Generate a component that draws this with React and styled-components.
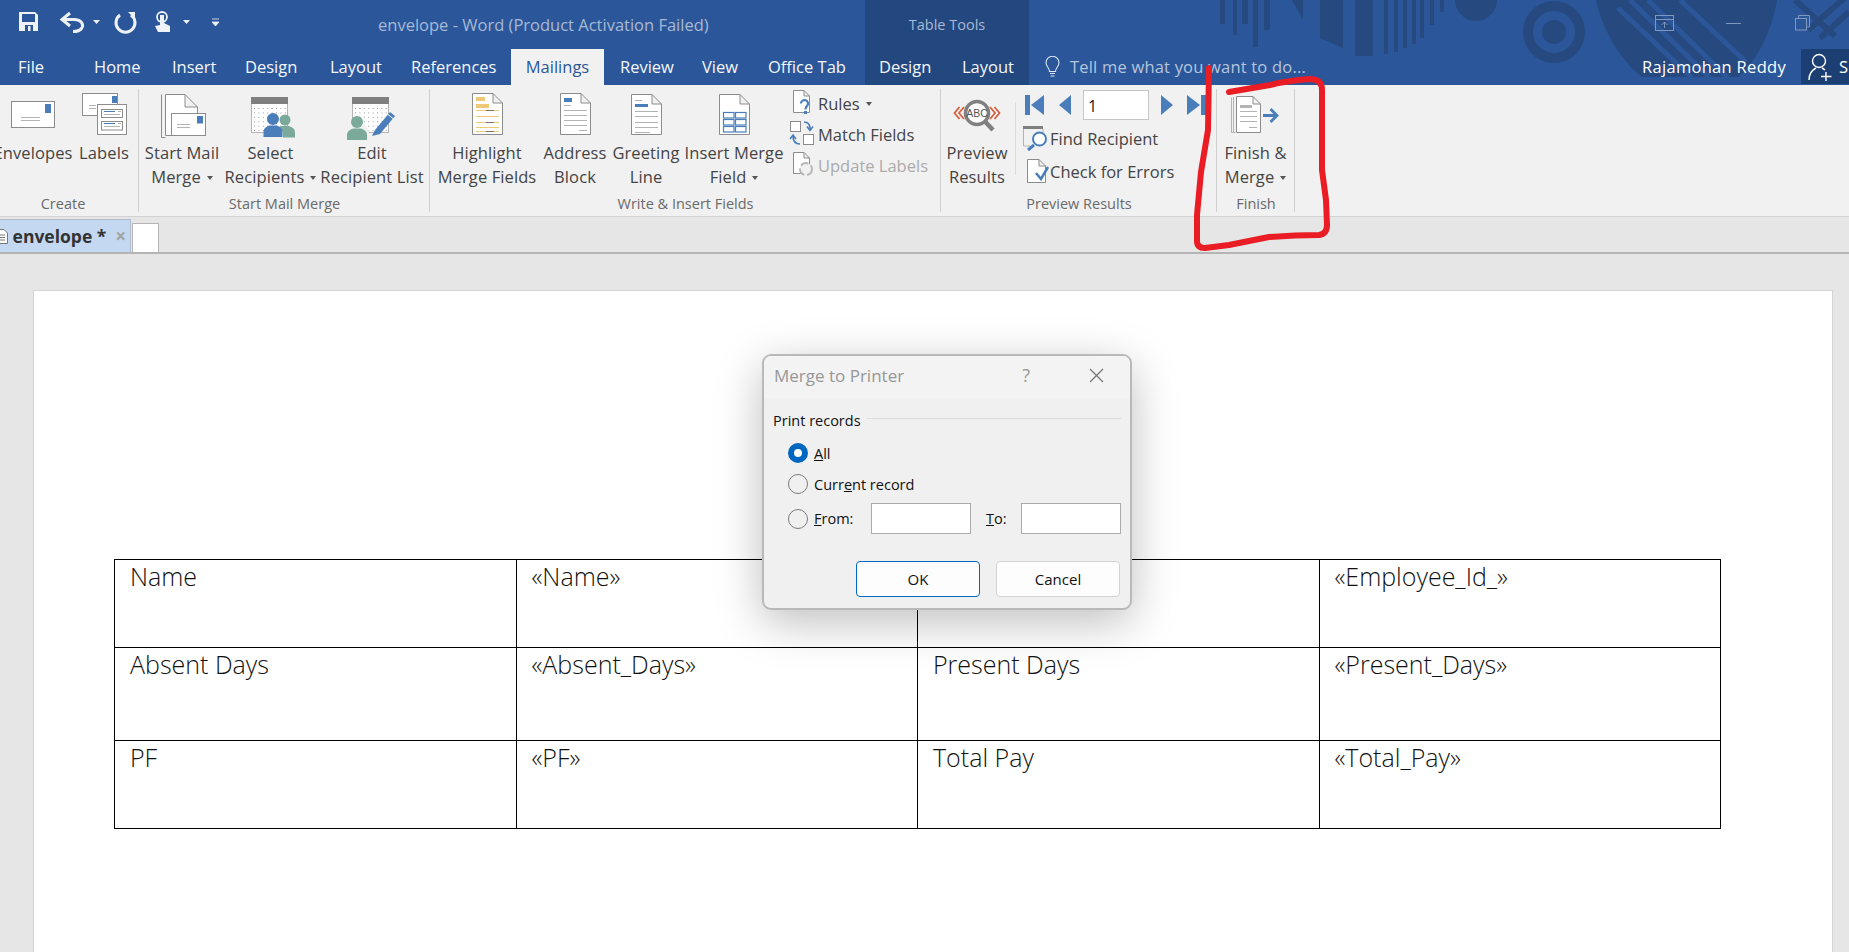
import React from 'react';
import styled, { createGlobalStyle } from 'styled-components';

const UI = '"Open Sans", "Noto Sans", "Liberation Sans", sans-serif';
const BLUE = '#4a7ebb';
const LINE = '#8c8c8c';
const PALE = '#b3b3b3';

const GlobalStyle = createGlobalStyle`
  html, body { margin: 0; padding: 0; background: #e6e6e6; overflow: hidden; }
  body { font-family: ${UI}; }
`;

const Screen = styled.div`
  position: relative;
  width: 1849px;
  height: 952px;
  overflow: hidden;
  background: #e6e6e6;
`;

/* ---------- header ---------- */
const Header = styled.header`
  position: relative;
  height: 85px;
  background: #2b579a;
  overflow: hidden;
`;
const Decor = styled.svg`
  position: absolute;
  left: 0;
  top: 0;
`;
const TitleRow = styled.div`
  position: relative;
  display: flex;
  height: 49px;
`;
const Qat = styled.svg`
  flex: 0 0 378px;
  height: 49px;
`;
const DocTitle = styled.div`
  flex: 0 0 487px;
  line-height: 50px;
  font-size: 16.5px;
  color: #a7b9d4;
  white-space: nowrap;
`;
const ToolsLabel = styled.div`
  flex: 0 0 164px;
  background: #23487f;
  text-align: center;
  line-height: 50px;
  font-size: 14.5px;
  color: #a7b9d4;
`;
const WindowIcons = styled.svg`
  margin-left: auto;
  width: 200px;
  height: 49px;
`;
const TabRow = styled.nav`
  position: relative;
  display: flex;
  align-items: stretch;
  height: 36px;
  padding-left: 18px;
`;
const Tab = styled.div`
  flex: 0 0 ${p => p.$w}px;
  min-width: 0;
  margin-left: ${p => p.$ml || 0}px;
  line-height: 35px;
  font-size: 16.5px;
  white-space: nowrap;
  color: #f4f6fa;
`;
const ActiveTab = styled.div`
  flex: 0 0 93px;
  background: #f1f1f1;
  color: #2b579a;
  text-align: center;
  line-height: 35px;
  font-size: 16.5px;
`;
const ContextTabs = styled.div`
  flex: 0 0 150px;
  display: flex;
  padding-left: 14px;
  background: #23487f;
`;
const TellMe = styled.div`
  display: flex;
  align-items: center;
  gap: 10px;
  margin-left: 16px;
  margin-top: -1px;
  font-size: 16.5px;
  letter-spacing: 0.2px;
  color: #b6c5dc;
  white-space: nowrap;
`;
const UserName = styled.div`
  margin-left: auto;
  line-height: 35px;
  font-size: 16.5px;
  letter-spacing: 0.3px;
  color: #fff;
  white-space: nowrap;
`;
const Share = styled.div`
  flex: 0 0 48px;
  display: flex;
  align-items: center;
  gap: 6px;
  margin-left: 15px;
  margin-bottom: 1px;
  padding-left: 7px;
  box-sizing: border-box;
  background: #1c3f73;
  color: #fff;
  font-size: 16.5px;
  overflow: hidden;
`;

/* ---------- ribbon ---------- */
const Ribbon = styled.section`
  display: flex;
  height: 131px;
  margin-left: -13px;
  background: #f1f1f1;
  border-bottom: 1px solid #d2d2d2;
  width: 1862px;
  overflow: hidden;
`;
const Group = styled.div`
  position: relative;
  flex: 0 0 ${p => p.$w}px;
  min-width: 0;
  display: flex;
  flex-direction: column;
  padding-left: ${p => p.$pl || 0}px;
  box-sizing: border-box;
  &::after {
    content: '';
    position: absolute;
    right: 0;
    top: 4px;
    bottom: 4px;
    width: 1px;
    background: #cfcfcf;
  }
`;
const GroupBody = styled.div`
  flex: 1;
  display: flex;
`;
const GroupLabel = styled.div`
  position: absolute;
  left: 0;
  right: 0;
  bottom: 1px;
  height: 22px;
  text-align: center;
  line-height: 22px;
  font-size: 14.5px;
  color: #6a6a6a;
  white-space: nowrap;
`;
const LargeButton = styled.div`
  flex: 0 0 ${p => p.$w}px;
  min-width: 0;
  display: flex;
  flex-direction: column;
  align-items: center;
`;
const BigSvg = styled.svg`
  flex: 0 0 56px;
  overflow: visible;
`;
const Line = styled.div`
  height: 24px;
  line-height: 24px;
  font-size: 16.5px;
  letter-spacing: 0.1px;
  color: #444;
  white-space: nowrap;
`;
const Caret = styled.span`
  display: inline-block;
  width: 0;
  height: 0;
  margin-left: 6px;
  vertical-align: 3px;
  border-left: 3.5px solid transparent;
  border-right: 3.5px solid transparent;
  border-top: 4px solid #555;
`;
const SmallColumn = styled.div`
  display: flex;
  flex-direction: column;
  margin-left: ${p => p.$ml || 0}px;
  padding-top: ${p => p.$pt || 3}px;
`;
const SmallRow = styled.div`
  display: flex;
  align-items: center;
  height: ${p => p.$h}px;
  font-size: 16.5px;
  color: ${p => (p.$off ? '#ababab' : '#444')};
  white-space: nowrap;
`;
const SmallSvg = styled.svg`
  flex: 0 0 ${p => p.$w}px;
  overflow: visible;
`;
const VRule = styled.div`
  flex: 0 0 1px;
  height: 73px;
  margin: 17px 0 0 2px;
  background: #dcdcdc;
`;
const NavRow = styled.div`
  display: flex;
  align-items: center;
  height: 30px;
  margin-bottom: 2px;
  padding-left: 2px;
`;
const NavSvg = styled.svg`
  flex: 0 0 auto;
  margin-left: ${p => p.$ml || 0}px;
  fill: ${BLUE};
`;
const RecordBox = styled.div`
  flex: 0 0 66px;
  height: 30px;
  box-sizing: border-box;
  margin-left: 12px;
  padding-left: 4px;
  background: #fff;
  border: 1px solid #c6c6c6;
  font-size: 16px;
  line-height: 30px;
  color: #222;
`;

/* ---------- document tabs ---------- */
const TabStrip = styled.div`
  display: flex;
  align-items: flex-end;
  gap: 1px;
  height: 37px;
  box-sizing: border-box;
  background: #e6e6e6;
  border-bottom: 2px solid #b4b4b4;
`;
const DocTab = styled.div`
  flex: 0 0 131px;
  height: 33px;
  display: flex;
  align-items: center;
  box-sizing: border-box;
  background: #c5d8f2;
  border: 1px solid #b0bdd0;
  border-left: 0;
  border-bottom: 0;
  font-size: 17.5px;
  font-weight: 700;
  color: #333;
  white-space: nowrap;
`;
const DocTabClose = styled.span`
  margin-left: 9px;
  font-size: 19px;
  line-height: 19px;
  font-weight: 700;
  color: #a3a3a3;
`;
const NewTab = styled.div`
  flex: 0 0 27px;
  height: 29px;
  box-sizing: border-box;
  background: #fff;
  border: 1px solid #b4b4b4;
  border-bottom: 0;
`;

/* ---------- page ---------- */
const DocArea = styled.main`
  padding: 36px 0 0 33px;
`;
const Page = styled.div`
  width: 1800px;
  height: 700px;
  box-sizing: border-box;
  padding: 268px 0 0 80px;
  background: #fff;
  border: 1px solid #d4d4d4;
`;
const Table = styled.table`
  border-collapse: collapse;
  table-layout: fixed;
  width: 1607px;
  font-family: "Open Sans", "Liberation Sans", sans-serif;
  font-weight: 300;
  font-size: 25px;
  color: #111;
`;
const Row = styled.tr`
  height: ${p => p.$h}px;
`;
const Cell = styled.td`
  vertical-align: top;
  padding: 0 15px;
  border: 1.2px solid #000;
  line-height: 32px;
`;

/* ---------- dialog ---------- */
const Dialog = styled.div`
  position: absolute;
  left: 762px;
  top: 354px;
  width: 370px;
  height: 256px;
  box-sizing: border-box;
  background: #f0f0f0;
  border: 2px solid #b9b9b9;
  border-radius: 9px;
  box-shadow: 0 12px 46px rgba(0, 0, 0, 0.26);
  overflow: hidden;
  font-size: 14.5px;
  color: #111;
`;
const DialogBar = styled.div`
  display: flex;
  align-items: center;
  height: 42px;
  box-sizing: border-box;
  padding: 0 0 4px 10px;
  background: #f3f3f3;
  font-size: 17px;
  color: #979797;
`;
const HelpMark = styled.span`
  margin-left: 118px;
  font-size: 18px;
`;
const CloseSvg = styled.svg`
  margin-left: 59px;
`;
const DialogBody = styled.div`
  padding: 12px 9px 0;
`;
const Legend = styled.div`
  display: flex;
  align-items: center;
  gap: 6px;
  height: 20px;
  margin-bottom: 8px;
  &::after {
    content: '';
    flex: 1;
    height: 1px;
    margin-top: -3px;
    background: #dcdcdc;
  }
`;
const RadioRow = styled.div`
  display: flex;
  align-items: center;
  height: ${p => p.$h || 30}px;
  margin-left: 15px;
  margin-bottom: ${p => p.$mb || 1}px;
`;
const Radio = styled.span`
  flex: 0 0 20px;
  height: 20px;
  box-sizing: border-box;
  border-radius: 50%;
  margin-right: 6px;
  background: ${p => (p.$on ? '#fff' : 'transparent')};
  border: ${p => (p.$on ? '6px solid #0067c0' : '1.5px solid #7a7a7a')};
`;
const FieldLabel = styled.span`
  flex: 0 0 ${p => p.$w}px;
  margin-left: ${p => p.$ml || 0}px;
`;
const Field = styled.div`
  flex: 0 0 100px;
  height: 31px;
  box-sizing: border-box;
  background: #fff;
  border: 1px solid #ababab;
`;
const Buttons = styled.div`
  display: flex;
  justify-content: flex-end;
  gap: 16px;
  margin: 27px 1px 0 0;
`;
const DialogButton = styled.div`
  width: 124px;
  height: 36px;
  box-sizing: border-box;
  border-radius: 4px;
  background: #fdfdfd;
  border: ${p => (p.$primary ? '1.5px solid #0067c0' : '1px solid #d3d3d3')};
  text-align: center;
  font-size: 15px;
  line-height: 34px;
`;

const Scribble = styled.svg`
  position: absolute;
  left: 1185px;
  top: 60px;
  pointer-events: none;
`;

/* ---------- icon parts, drawn in screen coordinates ---------- */
const Big = ({ x, w, children }) => (
  <BigSvg width={w} height={56} viewBox={`${x} 85 ${w} 56`}>{children}</BigSvg>
);
const Small = ({ x, y, w, h, children }) => (
  <SmallSvg $w={w} width={w} height={h} viewBox={`${x} ${y} ${w} ${h}`}>{children}</SmallSvg>
);
const Rules = ({ x1, x2, ys, c = PALE }) => ys.map(y => (
  <line key={y} x1={x1} x2={x2} y1={y + 0.5} y2={y + 0.5} stroke={c} />
));
const Sheet = ({ x, y, w, h, fold = 10 }) => (
  <path d={`M${x + 0.5} ${y + 0.5}H${x + w - fold}L${x + w - 0.5} ${y + fold}V${y + h - 0.5}H${x + 0.5}Z M${x + w - fold} ${y + 0.5}V${y + fold}H${x + w - 0.5}`} fill="#fff" stroke={LINE} />
);
const Calendar = ({ x }) => {
  const dots = [];
  for (let i = 0; i < 8; i++) for (let j = 0; j < 6; j++) dots.push([x + 3 + i * 4.4, 108 + j * 4.4]);
  return (
    <>
      <rect x={x + 0.5} y={97.5} width={36} height={35} fill="#fff" stroke={PALE} />
      <rect x={x} y={97} width={37} height={7} fill="#7f7f7f" />
      {dots.map(([a, b]) => <rect key={`${a}-${b}`} x={a} y={b} width={1} height={1} fill="#999" />)}
    </>
  );
};
const Person = ({ cx, cy, r, c, w }) => (
  <>
    <circle cx={cx} cy={cy} r={r} fill={c} />
    <path d={`M${cx - w} ${cy + r + 12}v-5c0-4 ${w * 0.4}-6 ${w * 0.62}-6.500h${w * 0.76}c${w * 0.22} .5 ${w * 0.62} 2.500 ${w * 0.62} 6.500v5z`} fill={c} />
  </>
);

const Envelope = () => (
  <Big x={0} w={66}>
    <rect x="11.500" y="101.500" width="43" height="26" fill="#fff" stroke={LINE} />
    <rect x="45" y="104" width="6" height="9" fill={BLUE} />
    <Rules x1={21} x2={40} ys={[117, 120]} />
  </Big>
);
const LabelsIcon = () => (
  <Big x={70} w={68}>
    <rect x="82.500" y="93.500" width="35" height="22" fill="#fff" stroke={LINE} />
    <rect x="112" y="96" width="5" height="7" fill={BLUE} />
    <Rules x1={89} x2={96} ys={[105, 108]} />
    <rect x="97.500" y="104.500" width="29" height="30" fill="#fff" stroke={LINE} />
    <rect x="101.500" y="109.500" width="21" height="8" fill="#fff" stroke={LINE} />
    <rect x="101.500" y="121.500" width="21" height="8.500" fill="#fff" stroke={LINE} />
    <Rules x1={104} x2={115} ys={[111, 123]} c={BLUE} />
    <Rules x1={118} x2={121} ys={[111, 123]} />
    <Rules x1={104} x2={120} ys={[114, 126]} />
  </Big>
);
const StartMerge = () => (
  <Big x={139} w={86}>
    <path d="M161.500 94.500V137.500H165.500" fill="none" stroke={LINE} />
    <Sheet x={165} y={94} w={33} h={42} fold={13} />
    <rect x="171.500" y="113.500" width="34" height="22" fill="#fff" stroke={LINE} />
    <rect x="197" y="116" width="6" height="7.500" fill={BLUE} />
    <Rules x1={177} x2={190} ys={[124, 127]} />
  </Big>
);
const SelectIcon = () => (
  <Big x={225} w={91}>
    <Calendar x={251} />
    <Person cx={285} cy={120} r={5.500} c="#7ba99a" w={10} />
    <path d="M264 139v-5c0-4 3-6 5-6.500h8c3 .5 6 2.500 6 6.500v5z" fill="#f1f1f1" />
    <Person cx={273} cy={119} r={6} c={BLUE} w={9.500} />
  </Big>
);
const EditIcon = () => (
  <Big x={316} w={112}>
    <Calendar x={352} />
    <path d="M345 139v-6c0-5 4-7 6-8h12c3 1 6 3 6 8v6z" fill="#f1f1f1" />
    <Person cx={357} cy={122} r={6} c="#7ba99a" w={10} />
    <path d="M375 130L390 112L395 116L380 134L372 136Z" fill={BLUE} />
    <path d="M388 114.500L393 118.500" stroke="#f1f1f1" />
  </Big>
);
const HighlightIcon = () => (
  <Big x={430} w={114}>
    <Sheet x={472} y={93} w={31} h={42} />
    <rect x="476" y="97" width="9" height="4" fill="#efc87a" />
    <rect x="476" y="104" width="13" height="4" fill="#efc87a" />
    <Rules x1={476} x2={499} ys={[110, 116, 122, 127, 131]} c="#efc87a" />
    <Rules x1={486} x2={494} ys={[110, 122, 131]} c="#777" />
  </Big>
);
const AddressIcon = () => (
  <Big x={544} w={62}>
    <Sheet x={560} y={93} w={31} h={42} />
    <rect x="564" y="98" width="8" height="4" fill={BLUE} />
    <Rules x1={564} x2={571} ys={[105]} />
    <Rules x1={564} x2={587} ys={[110, 115, 120, 125]} />
    <Rules x1={579} x2={587} ys={[130]} />
  </Big>
);
const GreetingIcon = () => (
  <Big x={606} w={80}>
    <Sheet x={631} y={94} w={31} h={41} />
    <Rules x1={635} x2={642} ys={[100]} />
    <rect x="635" y="104" width="13" height="3" fill={BLUE} />
    <Rules x1={635} x2={658} ys={[111, 116, 122, 127]} />
    <Rules x1={635} x2={650} ys={[132]} />
  </Big>
);
const InsertFieldIcon = () => (
  <Big x={686} w={96}>
    <Sheet x={719} y={94} w={31} h={41} />
    {[0, 1].map(c => [0, 1, 2].map(r => (
      <rect key={`${c}${r}`} x={723.5 + c * 12} y={112.5 + r * 7} width={10.5} height={5.5} fill="#fff" stroke={BLUE} strokeWidth="1.200" />
    )))}
  </Big>
);
const PreviewIcon = () => (
  <Big x={941} w={72}>
    <path d="M959.500 107L954.500 113L959.500 119M964 107L959 113L964 119M990 107L995 113L990 119M994.500 107L999.500 113L994.500 119" fill="none" stroke="#d9603f" strokeWidth="1.800" />
    <circle cx="977" cy="113" r="11.500" fill="#fff" stroke="#808080" strokeWidth="3.500" />
    <path d="M985.500 122L993 130" stroke="#808080" strokeWidth="4.500" />
    <text x="977" y="117" textAnchor="middle" fontFamily="Liberation Sans, sans-serif" fontSize="10.500" fill="#555">ABC</text>
  </Big>
);
const FinishIcon = () => (
  <Big x={1217} w={77}>
    <path d="M1231.500 97.500V132.500H1235.500M1233.500 97V132" fill="none" stroke={PALE} />
    <Sheet x={1236} y={96} w={25} h={37} fold={8} />
    <rect x="1240" y="105" width="12" height="3" fill={PALE} />
    <Rules x1={1240} x2={1257} ys={[111, 116, 121]} />
    <Rules x1={1249} x2={1257} ys={[127]} />
    <path d="M1263 115.500H1276M1270.500 109L1277 115.500L1270.500 122" fill="none" stroke={BLUE} strokeWidth="2.800" />
  </Big>
);

export default function App() {
  return (
    <Screen>
      <GlobalStyle />
      <Header>
        <Decor width="1849" height="85" viewBox="0 0 1849 85" fill="#26497f">
          <rect x="1220" y="0" width="5" height="24" />
          <rect x="1233" y="0" width="4" height="35" />
          <rect x="1242" y="0" width="6" height="24" />
          <rect x="1253" y="0" width="5" height="47" />
          <rect x="1264" y="0" width="6" height="30" />
          <path d="M1292 0H1303V20Z" />
          <path d="M1320 0H1343V48L1320 38Z" />
          <rect x="1355" y="0" width="18" height="56" />
          <rect x="1384" y="0" width="4" height="54" />
          <rect x="1394" y="0" width="4" height="52" />
          <rect x="1403" y="0" width="4" height="48" />
          <rect x="1412" y="0" width="4" height="44" />
          <rect x="1420" y="0" width="4" height="38" />
          <rect x="1430" y="0" width="4" height="25" />
          <rect x="1440" y="0" width="4" height="12" />
          <circle cx="1476" cy="0" r="21" />
          <circle cx="1554" cy="32" r="26" fill="none" stroke="#26497f" strokeWidth="10" />
          <circle cx="1554" cy="32" r="12" />
          <path d="M1596 0C1602 30 1622 62 1642 77H1738C1758 60 1772 30 1777 0Z" />
          <g stroke="#2b579a" strokeWidth="5" fill="none">
            <path d="M1618 8L1692 78M1630 0L1710 78M1648 0L1728 78M1680 0L1746 62" />
          </g>
          <g stroke="#26497f" strokeWidth="6" fill="none">
            <path d="M1795 0L1835 36M1849 12L1820 38M1849 -6L1808 30" />
          </g>
        </Decor>
        <TitleRow>
          <Qat viewBox="0 0 378 49">
            <path d="M19 12H35L38 15V31H19Z" fill="#eef1f6" />
            <rect x="22" y="14" width="13" height="8" fill="#2b579a" />
            <rect x="25" y="25" width="8" height="6" fill="#2b579a" />
            <rect x="28" y="26" width="2.500" height="5" fill="#eef1f6" />
            <path d="M70 13L62 19.500L70 26M62 19.500H74C82 19.500 84 25 81.500 28.500C80 30.500 77 31.500 73 31.500" fill="none" stroke="#eef1f6" strokeWidth="3" />
            <path d="M93 20H100L96.500 24Z" fill="#eef1f6" />
            <path d="M120 15A9.500 9.500 0 1 0 131 15" fill="none" stroke="#eef1f6" strokeWidth="3" />
            <path d="M128 12H135V19Z" fill="#eef1f6" />
            <circle cx="162" cy="17" r="5" fill="none" stroke="#eef1f6" strokeWidth="1.800" />
            <path d="M160 15H164V23L170 26V32H158L155 26L160 25Z" fill="#eef1f6" />
            <path d="M183 20H190L186.500 24Z" fill="#eef1f6" />
            <path d="M212 19H219M212 22H219L215.500 26Z" fill="#eef1f6" stroke="#eef1f6" strokeWidth=".8" />
          </Qat>
          <DocTitle>envelope - Word (Product Activation Failed)</DocTitle>
          <ToolsLabel>Table Tools</ToolsLabel>
          <WindowIcons viewBox="1649 0 200 49" fill="none" stroke="#7e98bf">
            <rect x="1655.500" y="15.500" width="18" height="15" />
            <path d="M1655.500 19.500H1673.500M1664.500 28V22M1661.500 25L1664.500 22L1667.500 25" />
            <path d="M1726 23.500H1741" />
            <rect x="1795.500" y="18.500" width="11" height="11.500" />
            <path d="M1798.500 18V15.500H1809.500V27H1806.500" />
          </WindowIcons>
        </TitleRow>
        <TabRow>
          <Tab $w={76}>File</Tab>
          <Tab $w={78}>Home</Tab>
          <Tab $w={73}>Insert</Tab>
          <Tab $w={85}>Design</Tab>
          <Tab $w={81}>Layout</Tab>
          <Tab $w={100}>References</Tab>
          <ActiveTab>Mailings</ActiveTab>
          <Tab $w={82} $ml={16}>Review</Tab>
          <Tab $w={66}>View</Tab>
          <Tab $w={97}>Office Tab</Tab>
          <ContextTabs>
            <Tab $w={83}>Design</Tab>
            <Tab $w={53}>Layout</Tab>
          </ContextTabs>
          <TellMe>
            <svg width="15" height="21" viewBox="0 0 15 21" fill="none" stroke="#dfe6f0" strokeWidth="1.100">
              <path d="M4.500 15.500C4.500 12 1 10.500 1 6.800A6.500 6.500 0 0 1 14 6.800C14 10.500 10.500 12 10.500 15.500Z" />
              <path d="M5 17.500H10M5.500 20H9.500" />
            </svg>
            Tell me what you want to do...
          </TellMe>
          <UserName>Rajamohan Reddy</UserName>
          <Share>
            <svg width="25" height="28" viewBox="0 0 25 28" fill="none" stroke="#fff" strokeWidth="1.400" style={{ flex: '0 0 25px' }}>
              <circle cx="11" cy="8" r="6.500" />
              <path d="M1 27C1 20 5 16.500 8 15M14 15C15 15.500 16 16 17 17M18 19V28M13 23.500H23.500" />
            </svg>
            S
          </Share>
        </TabRow>
      </Header>

      <Ribbon>
        <Group $w={152} $pl={13}>
          <GroupBody>
            <LargeButton $w={66}><Envelope /><Line>Envelopes</Line></LargeButton>
            <LargeButton $w={4} />
            <LargeButton $w={68}><LabelsIcon /><Line>Labels</Line></LargeButton>
          </GroupBody>
          <GroupLabel>Create</GroupLabel>
        </Group>
        <Group $w={291}>
          <GroupBody>
            <LargeButton $w={86}><StartMerge /><Line>Start Mail</Line><Line>Merge<Caret /></Line></LargeButton>
            <LargeButton $w={91}><SelectIcon /><Line>Select</Line><Line>Recipients<Caret /></Line></LargeButton>
            <LargeButton $w={112}><EditIcon /><Line>Edit</Line><Line>Recipient List</Line></LargeButton>
          </GroupBody>
          <GroupLabel>Start Mail Merge</GroupLabel>
        </Group>
        <Group $w={511}>
          <GroupBody>
            <LargeButton $w={114}><HighlightIcon /><Line>Highlight</Line><Line>Merge Fields</Line></LargeButton>
            <LargeButton $w={62}><AddressIcon /><Line>Address</Line><Line>Block</Line></LargeButton>
            <LargeButton $w={80}><GreetingIcon /><Line>Greeting</Line><Line>Line</Line></LargeButton>
            <LargeButton $w={96}><InsertFieldIcon /><Line>Insert Merge</Line><Line>Field<Caret /></Line></LargeButton>
            <SmallColumn $ml={8}>
              <SmallRow $h={31}>
                <Small x={790} y={89} w={28} h={31}>
                  <Sheet x={793} y={91} w={17} h={23} fold={6} />
                  <path d="M801 104.500A3.500 3.500 0 1 1 807 107C805.500 108 805.500 109 805.500 110.500" fill="none" stroke={BLUE} strokeWidth="2.200" />
                  <rect x="804" y="112" width="3" height="3" fill={BLUE} />
                </Small>
                Rules<Caret />
              </SmallRow>
              <SmallRow $h={31}>
                <Small x={790} y={120} w={28} h={31}>
                  <rect x="790.500" y="122.500" width="10" height="10" fill="#fff" stroke={LINE} />
                  <rect x="803.500" y="135.500" width="10" height="10" fill="#fff" stroke={LINE} />
                  <path d="M804 123C808 123 810 125 810 130M807 127.500L810 131.500L813 127.500M800 145C795 145 793 142 793 137M790 140L793 136L796 140" fill="none" stroke={BLUE} strokeWidth="1.600" />
                </Small>
                Match Fields
              </SmallRow>
              <SmallRow $h={31} $off>
                <Small x={790} y={151} w={28} h={31}>
                  <Sheet x={793} y={153} w={17} h={22} fold={6} />
                  <circle cx="806" cy="170" r="6" fill="#f1f1f1" stroke="#b8b8b8" strokeWidth="2" strokeDasharray="8 3" />
                </Small>
                Update Labels
              </SmallRow>
            </SmallColumn>
          </GroupBody>
          <GroupLabel>Write &amp; Insert Fields</GroupLabel>
        </Group>
        <Group $w={276}>
          <GroupBody>
            <LargeButton $w={72}><PreviewIcon /><Line>Preview</Line><Line>Results</Line></LargeButton>
            <VRule />
            <SmallColumn $ml={7} $pt={5}>
              <NavRow>
                <NavSvg width="19" height="20" viewBox="0 0 19 20"><rect width="5" height="20" /><path d="M19 0V20L6 10Z" /></NavSvg>
                <NavSvg $ml={15} width="12" height="20" viewBox="0 0 12 20"><path d="M12 0V20L0 10Z" /></NavSvg>
                <RecordBox>1</RecordBox>
                <NavSvg $ml={12} width="12" height="20" viewBox="0 0 12 20"><path d="M0 0V20L12 10Z" /></NavSvg>
                <NavSvg $ml={14} width="19" height="20" viewBox="0 0 19 20"><path d="M0 0V20L13 10Z" /><rect x="14" width="5" height="20" /></NavSvg>
              </NavRow>
              <SmallRow $h={33}>
                <Small x={1023} y={122} w={27} h={33}>
                  <rect x="1023" y="126" width="20" height="3" fill="#7f7f7f" />
                  <path d="M1023.500 129V146H1030M1043 129V132" fill="none" stroke={PALE} />
                  <circle cx="1039.500" cy="139" r="6.500" fill="#fff" stroke={BLUE} strokeWidth="2" />
                  <path d="M1034 145L1028 150" stroke={BLUE} strokeWidth="3" />
                </Small>
                Find Recipient
              </SmallRow>
              <SmallRow $h={33}>
                <Small x={1023} y={155} w={27} h={33}>
                  <Sheet x={1027} y={159} w={19} h={24} fold={7} />
                  <path d="M1036 173L1041 179L1048 167" fill="none" stroke={BLUE} strokeWidth="2.500" />
                </Small>
                Check for Errors
              </SmallRow>
            </SmallColumn>
          </GroupBody>
          <GroupLabel>Preview Results</GroupLabel>
        </Group>
        <Group $w={78}>
          <GroupBody>
            <LargeButton $w={77}><FinishIcon /><Line>Finish &amp;</Line><Line>Merge<Caret /></Line></LargeButton>
          </GroupBody>
          <GroupLabel>Finish</GroupLabel>
        </Group>
      </Ribbon>

      <TabStrip>
        <DocTab>
          <svg width="12" height="15" viewBox="0 0 12 15" fill="#fff" stroke="#777" style={{ flex: '0 0 12px', marginLeft: -4 }}>
            <path d="M.5.500H8L11.500 4V14.500H.5ZM3 6H9M3 8.500H9M3 11H9" />
          </svg>
          &nbsp;envelope *
          <DocTabClose>×</DocTabClose>
        </DocTab>
        <NewTab />
      </TabStrip>

      <DocArea>
        <Page>
          <Table>
            <colgroup>
              <col style={{ width: '25%' }} /><col style={{ width: '25%' }} /><col style={{ width: '25%' }} /><col style={{ width: '25%' }} />
            </colgroup>
            <tbody>
              <Row $h={88}><Cell>Name</Cell><Cell>«Name»</Cell><Cell /><Cell>«Employee_Id_»</Cell></Row>
              <Row $h={93}><Cell>Absent Days</Cell><Cell>«Absent_Days»</Cell><Cell>Present Days</Cell><Cell>«Present_Days»</Cell></Row>
              <Row $h={88}><Cell>PF</Cell><Cell>«PF»</Cell><Cell>Total Pay</Cell><Cell>«Total_Pay»</Cell></Row>
            </tbody>
          </Table>
        </Page>
      </DocArea>

      <Dialog>
        <DialogBar>
          Merge to Printer
          <HelpMark>?</HelpMark>
          <CloseSvg width="15" height="15" viewBox="0 0 15 15" stroke="#777" strokeWidth="1.300"><path d="M1 1L14 14M14 1L1 14" /></CloseSvg>
        </DialogBar>
        <DialogBody>
          <Legend>Print records</Legend>
          <RadioRow><Radio $on /><span><u>A</u>ll</span></RadioRow>
          <RadioRow $mb={4}><Radio /><span>Curr<u>e</u>nt record</span></RadioRow>
          <RadioRow $h={31}>
            <Radio />
            <FieldLabel $w={57}><u>F</u>rom:</FieldLabel>
            <Field />
            <FieldLabel $w={35} $ml={15}><u>T</u>o:</FieldLabel>
            <Field />
          </RadioRow>
          <Buttons>
            <DialogButton $primary>OK</DialogButton>
            <DialogButton>Cancel</DialogButton>
          </Buttons>
        </DialogBody>
      </Dialog>

      <Scribble width="150" height="200" viewBox="1185 60 150 200" fill="none" stroke="#ea1c24" strokeWidth="6" strokeLinecap="round" strokeLinejoin="round">
        <path d="M1209 68L1208 130L1201 172L1197 215L1197 241Q1197 248 1205 248L1229 245L1269 237Q1295 235 1319 235Q1327 234 1327 225L1326 200L1322 170L1322 90Q1322 79 1310 79Q1285 81 1270 85L1229 92" />
      </Scribble>
    </Screen>
  );
}
